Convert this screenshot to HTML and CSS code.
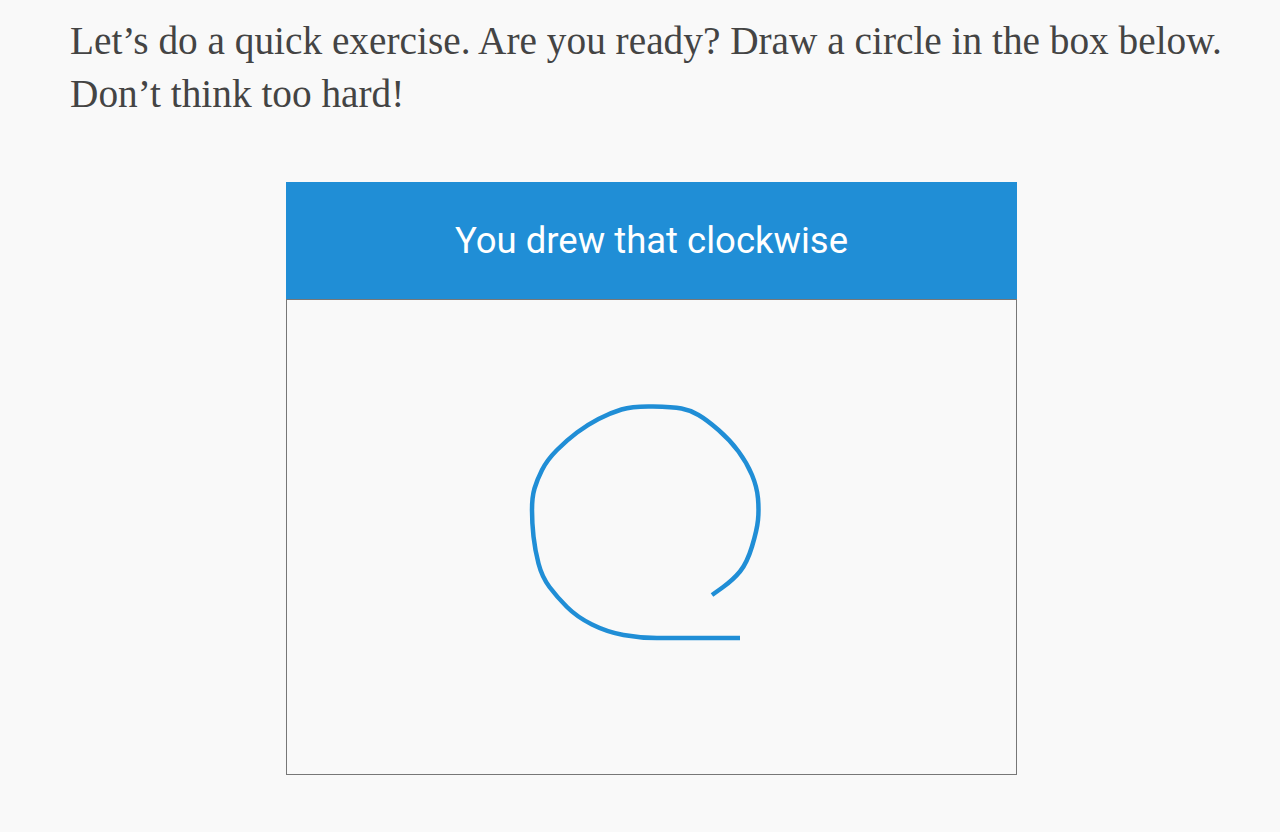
FILE: index.html
```html
<!DOCTYPE html>
<html lang="en">
<head>
    <meta charset="UTF-8">
    <meta name="viewport" content="width=device-width, initial-scale=1.0">
    <title>Draw a circle</title>
    <link rel="stylesheet" href="styles.css">
</head>
<body>
    <div class="content">
        <p class="intro">Let’s do a quick exercise. Are you ready? Draw a circle in the box below. Don’t think too hard!</p>
        <div class="drawbox">
            <div class="drawbox-header">You drew that clockwise</div>
            <div class="drawbox-canvas">
                <svg width="729" height="474" viewBox="0 0 729 474">
                    <path class="stroke" d="M425 295 L435.5 287.5 Q446 280 453 271.5 Q460 263 465 246.5 Q470 230 471 220 Q472 210 471 198.5 Q470 187 465 175 Q460 163 451.5 151.5 Q443 140 431.5 130 Q420 120 411.5 115 Q403 110 394.5 108.5 Q386 107 366 106.5 Q346 106 334.5 109.5 Q323 113 311.5 119 Q300 125 290 132.5 Q280 140 270 150 Q260 160 255 170 Q250 180 247.5 188.5 Q245 197 245 210 Q245 223 246.5 236.5 Q248 250 251.5 263.5 Q255 277 262.5 287 Q270 297 280 307 Q290 317 305 324.5 Q320 332 336.5 335 Q353 338 370 338 L453 338"/>
                </svg>
            </div>
        </div>
    </div>
</body>
</html>
```

FILE: styles.css
```css
body {
    margin: 0;
    background-color: #f9f9f9;
}
.content {
    padding: 15px 40px 60px 70px;
}
.intro {
    margin: 0;
    font-family: "Liberation Serif", serif;
    font-size: 39.3px;
    line-height: 53px;
    color: #444;
}
.drawbox {
    width: 731px;
    margin: 61px 0 0 216px;
}
.drawbox-header {
    height: 117px;
    display: flex;
    align-items: center;
    justify-content: center;
    background-color: #208ed6;
    color: white;
    font-family: Roboto, sans-serif;
    font-size: 36.5px;
}
.drawbox-canvas {
    height: 476px;
    border: 1px solid #777;
    box-sizing: border-box;
}
.drawbox-canvas svg {
    display: block;
}
.stroke {
    fill: none;
    stroke: #208ed6;
    stroke-width: 4.5;
    stroke-linejoin: round;
}
```
